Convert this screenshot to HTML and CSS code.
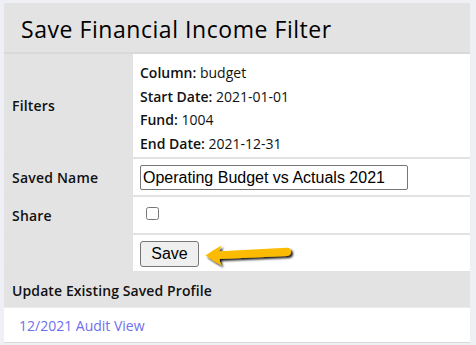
FILE: index.html
```html
<!DOCTYPE html>
<html>
<head>
<meta charset="utf-8">
<link rel="stylesheet" href="styles.css">
</head>
<body>
<div class="panel">
  <div class="panel-head">Save Financial Income Filter</div>
  <div class="row">
    <div class="label">Filters</div>
    <div class="value filters">
      <div><b>Column:</b> budget</div>
      <div><b>Start Date:</b> 2021-01-01</div>
      <div><b>Fund:</b> 1004</div>
      <div><b>End Date:</b> 2021-12-31</div>
    </div>
  </div>
  <div class="row">
    <div class="label">Saved Name</div>
    <div class="value name-cell"><input class="name-input" type="text" value="Operating Budget vs Actuals 2021"></div>
  </div>
  <div class="row">
    <div class="label">Share</div>
    <div class="value check-cell"><input class="check" type="checkbox"></div>
  </div>
  <div class="row">
    <div class="label"></div>
    <div class="value save-cell">
      <button class="save-btn">Save</button>
      <svg class="arrow" width="92" height="28" viewBox="0 0 92 28">
        <defs>
          <filter id="sh" x="-10%" y="-30%" width="130%" height="180%">
            <feDropShadow dx="2" dy="2" stdDeviation="0.8" flood-color="#000" flood-opacity="0.9"/>
          </filter>
        </defs>
        <path filter="url(#sh)" fill="#fbbb06" d="M1.5 12.5 Q9 7 17.5 2.5 Q15.5 6 15.5 8.3 L83 4.8 Q87 4.8 87 8.8 Q87 12.7 83 13 L15.5 16 Q15.5 18.5 17.5 22.5 Q9 18 1.5 12.5 Z"/>
      </svg>
    </div>
  </div>
  <div class="section">Update Existing Saved Profile</div>
  <div class="link-row"><a class="link" href="#">12/2021 Audit View</a></div>
</div>
</body>
</html>
```
FILE: styles.css
```css
html, body {
  margin: 0;
  padding: 0;
  background: #eff0f6;
  font-family: "Open Sans", "Noto Sans", sans-serif;
  color: #111;
}
.panel {
  margin: 3px 0 0 4px;
  width: 466px;
  background: #fff;
}
.panel-head {
  background: #e3e3e3;
  height: 51px;
  box-sizing: border-box;
  padding: 10px 0 0 17px;
  font-size: 23px;
  letter-spacing: 0.55px;
  font-weight: 500;
  color: #000;
  border-bottom: 2px solid #d9d9d9;
}
.row {
  display: grid;
  grid-template-columns: 129px 1fr;
  border-bottom: 2px solid #e2e2e2;
}
.label {
  background: #e3e3e3;
  padding-left: 8px;
  display: flex;
  align-items: center;
  font-size: 14px;
  font-weight: 600;
  letter-spacing: 0.2px;
}
.value {
  background: #fff;
  padding: 0 7px;
  font-size: 14px;
}
.filters {
  padding-top: 7px;
  padding-bottom: 2px;
  line-height: 23.5px;
}
.filters b { font-weight: 600; }
.name-cell {
  padding-top: 6px;
  padding-bottom: 5px;
}
.name-input {
  width: 268px;
  height: 25px;
  box-sizing: border-box;
  margin: 0;
  font-family: "Liberation Sans", Arial, sans-serif;
  font-size: 16px;
  padding: 1px 2px;
  border: 1px solid #767676;
  border-radius: 2px;
  display: block;
}
.check-cell {
  padding-top: 10px;
  padding-bottom: 13px;
}
.check {
  margin: 0 0 0 6px;
  width: 13px;
  height: 13px;
  display: block;
}
.save-cell {
  display: flex;
  align-items: center;
  gap: 5px;
  padding-top: 6px;
  padding-bottom: 4px;
}
.save-btn {
  font-family: "Liberation Sans", Arial, sans-serif;
  font-size: 16px;
  height: 26px;
  width: 59px;
  padding: 0;
  border: 1px solid #767676;
  border-radius: 3px;
  background: #efefef;
  color: #000;
}
.arrow { display: block; margin: 2px 0 -4px 0; }
.section {
  background: #e3e3e3;
  height: 35px;
  box-sizing: border-box;
  padding: 8px 0 0 8px;
  font-size: 14px;
  font-weight: 600;
  letter-spacing: 0.1px;
  border-bottom: 1px solid #ececec;
}
.link-row {
  height: 35px;
  box-sizing: border-box;
  padding: 6px 0 0 15px;
  border-bottom: 1px solid #d9d9d9;
}
.link {
  color: #6f6ff0;
  text-decoration: none;
  font-size: 14px;
}
```
